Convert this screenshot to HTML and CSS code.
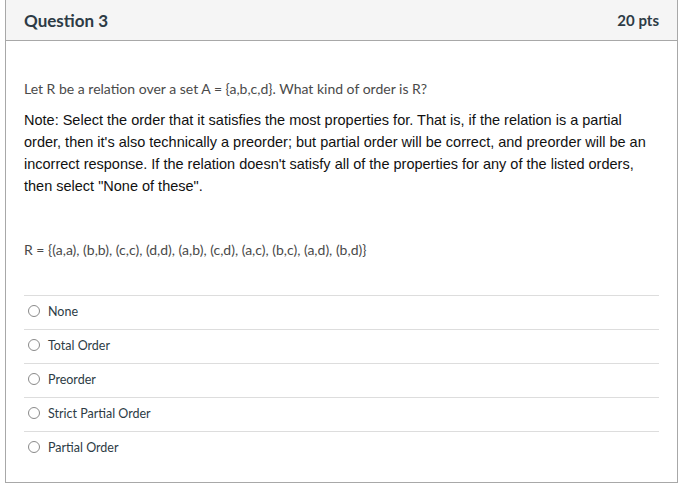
FILE: index.html
```html
<!DOCTYPE html>
<html>
<head>
<meta charset="utf-8">
<link rel="stylesheet" href="styles.css">
</head>
<body>
<div class="question">
  <div class="header">
    <span class="title">Question 3</span>
    <span class="pts">20 pts</span>
  </div>
  <div class="content">
    <p class="lead">Let R be a relation over a set A = {a,b,c,d}. What kind of order is R?</p>
    <p class="note">Note: Select the order that it satisfies the most properties for. That is, if the relation is a partial order, then it's also technically a preorder; but partial order will be correct, and preorder will be an incorrect response. If the relation doesn't satisfy all of the properties for any of the listed orders, then select "None of these".</p>
    <p class="rel">R = {(a,a), (b,b), (c,c), (d,d), (a,b), (c,d), (a,c), (b,c), (a,d), (b,d)}</p>
    <div class="answers">
      <div class="answer"><span class="radio"></span><span class="label">None</span></div>
      <div class="answer"><span class="radio"></span><span class="label">Total Order</span></div>
      <div class="answer"><span class="radio"></span><span class="label">Preorder</span></div>
      <div class="answer"><span class="radio"></span><span class="label">Strict Partial Order</span></div>
      <div class="answer"><span class="radio"></span><span class="label">Partial Order</span></div>
    </div>
  </div>
</div>
</body>
</html>
```
FILE: styles.css
```css
html, body {
  margin: 0;
  padding: 0;
  background: #ffffff;
}
.question {
  margin-left: 5px;
  width: 671px;
  height: 482px;
  border: 1px solid #a8a8a8;
  border-top: none;
  box-sizing: content-box;
  font-family: Lato, "Liberation Sans", sans-serif;
}
.header {
  height: 40px;
  background: #f5f5f5;
  border-bottom: 1px solid #a8a8a8;
  display: flex;
  align-items: center;
  justify-content: space-between;
  padding: 0 18px;
}
.title {
  font-weight: bold;
  font-size: 17px;
  color: #2d3b45;
}
.pts {
  font-weight: bold;
  font-size: 15px;
  color: #2d3b45;
}
.content {
  padding: 38px 18px 0 18px;
}
p {
  margin: 0;
}
.lead {
  font-size: 14px;
  line-height: 20px;
  color: #4a4a4a;
}
.note {
  margin-top: 10px;
  font-family: "Liberation Sans", Arial, sans-serif;
  font-size: 14.5px;
  line-height: 22px;
  color: #111111;
}
.rel {
  margin-top: 43px;
  font-size: 14px;
  line-height: 20px;
  color: #4a4a4a;
}
.answers {
  margin-top: 35px;
}
.answer {
  border-top: 1px solid #dddddd;
  height: 33px;
  display: flex;
  align-items: center;
  padding-left: 4px;
  padding-bottom: 3px;
  box-sizing: border-box;
  height: 34px;
}
.radio {
  width: 10px;
  height: 10px;
  border: 1px solid #8a8a8a;
  border-radius: 50%;
  margin-right: 8px;
}
.label {
  font-size: 12.5px;
  color: #2d3b45;
}
```
